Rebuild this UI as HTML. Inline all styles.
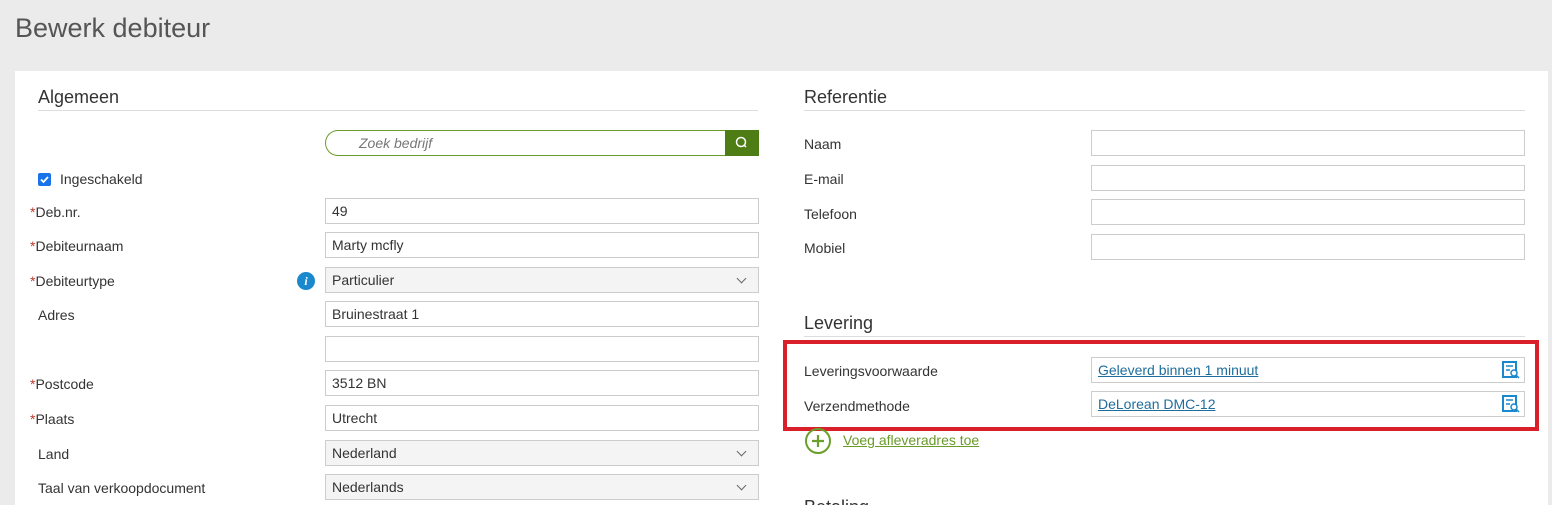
<!DOCTYPE html><html><head><style>
html,body{margin:0;width:1552px;height:505px;overflow:hidden}
body{background:#ebebeb;font-family:"Liberation Sans",sans-serif;color:#333;position:relative}
.a{position:absolute}
.t{font-size:27px;color:#555;left:15px;top:13px;font-weight:normal}
.panel{left:15px;top:71px;width:1533px;height:434px;background:#fff}
.h{font-size:18px;color:#333}
.line{height:1px;background:#ddd}
.l{font-size:14px;color:#333}
.s{color:#c0392b}
.in{border:1px solid #ccc;background:#fff;height:26px;box-sizing:border-box;font-size:14px;line-height:25px;padding-left:6px}
.sel{background:#f4f4f4}
.sel:after{content:"";position:absolute;right:13px;top:7px;width:6px;height:6px;border-right:1px solid #666;border-bottom:1px solid #666;transform:rotate(45deg)}
a{color:#1f6d9c;text-decoration:underline}
</style></head><body>
<div class="a t">Bewerk debiteur</div>
<div class="a panel"></div>
<div class="a h" style="left:38px;top:87px">Algemeen</div>
<div class="a line" style="left:38px;top:110px;width:720px"></div>
<div class="a h" style="left:804px;top:87px">Referentie</div>
<div class="a line" style="left:804px;top:110px;width:721px"></div>

<div class="a" style="left:325px;top:130px;width:400px;height:26px;border:1px solid #6a9a2a;border-right:none;border-radius:14px 0 0 14px;box-sizing:border-box;font-style:italic;color:#777;font-size:14px;line-height:25px;padding-left:33px">Zoek bedrijf</div>
<div class="a" style="left:725px;top:130px;width:34px;height:26px;background:#4e7d16"><svg width="34" height="26"><circle cx="16" cy="12" r="4.5" fill="none" stroke="#fff" stroke-width="1.5"/><line x1="19" y1="15" x2="21" y2="17" stroke="#fff" stroke-width="1.5"/></svg></div>

<div class="a" style="left:38px;top:173px;width:13px;height:13px;background:#1a73e8;border-radius:2px"><svg width="13" height="13"><path d="M3 6.5l2.5 2.5 4.5-5" fill="none" stroke="#fff" stroke-width="1.8"/></svg></div>
<div class="a l" style="left:60px;top:171px">Ingeschakeld</div>

<div class="a l" style="left:30px;top:204px"><span class="s">*</span>Deb.nr.</div>
<div class="a in" style="left:325px;top:198px;width:434px">49</div>
<div class="a l" style="left:30px;top:238px"><span class="s">*</span>Debiteurnaam</div>
<div class="a in" style="left:325px;top:232px;width:434px">Marty mcfly</div>
<div class="a l" style="left:30px;top:273px"><span class="s">*</span>Debiteurtype</div>
<div class="a" style="left:297px;top:272px;width:18px;height:18px;border-radius:50%;background:#1a88cc;color:#fff;font-size:12px;font-weight:bold;font-style:italic;text-align:center;line-height:18px;font-family:'Liberation Serif',serif">i</div>
<div class="a in sel" style="left:325px;top:267px;width:434px">Particulier</div>
<div class="a l" style="left:38px;top:307px">Adres</div>
<div class="a in" style="left:325px;top:301px;width:434px">Bruinestraat 1</div>
<div class="a in" style="left:325px;top:336px;width:434px"></div>
<div class="a l" style="left:30px;top:376px"><span class="s">*</span>Postcode</div>
<div class="a in" style="left:325px;top:370px;width:434px">3512 BN</div>
<div class="a l" style="left:30px;top:411px"><span class="s">*</span>Plaats</div>
<div class="a in" style="left:325px;top:405px;width:434px">Utrecht</div>
<div class="a l" style="left:38px;top:446px">Land</div>
<div class="a in sel" style="left:325px;top:440px;width:434px">Nederland</div>
<div class="a l" style="left:38px;top:480px">Taal van verkoopdocument</div>
<div class="a in sel" style="left:325px;top:474px;width:434px">Nederlands</div>

<div class="a l" style="left:804px;top:136px">Naam</div>
<div class="a in" style="left:1091px;top:130px;width:434px"></div>
<div class="a l" style="left:804px;top:171px">E-mail</div>
<div class="a in" style="left:1091px;top:165px;width:434px"></div>
<div class="a l" style="left:804px;top:206px">Telefoon</div>
<div class="a in" style="left:1091px;top:199px;width:434px"></div>
<div class="a l" style="left:804px;top:240px">Mobiel</div>
<div class="a in" style="left:1091px;top:234px;width:434px"></div>

<div class="a h" style="left:804px;top:313px">Levering</div>
<div class="a line" style="left:804px;top:336px;width:721px"></div>
<div class="a" style="left:783px;top:340px;width:756px;height:91px;border:4px solid #d9202a;box-sizing:border-box"></div>
<div class="a l" style="left:804px;top:363px">Leveringsvoorwaarde</div>
<div class="a in" style="left:1091px;top:357px;width:434px"><a>Geleverd binnen 1 minuut</a></div>
<div class="a l" style="left:804px;top:398px">Verzendmethode</div>
<div class="a in" style="left:1091px;top:391px;width:434px"><a>DeLorean DMC-12</a></div>
<svg class="a" style="left:1502px;top:361px" width="18" height="18"><rect x="1" y="1" width="13" height="15" fill="none" stroke="#1a88cc" stroke-width="2"/><line x1="4" y1="5" x2="11" y2="5" stroke="#1a88cc" stroke-width="1.5"/><line x1="4" y1="9" x2="8" y2="9" stroke="#1a88cc" stroke-width="1.5"/><circle cx="12" cy="12" r="3" fill="#fff" stroke="#1a88cc" stroke-width="1.5"/><line x1="14" y1="14" x2="17" y2="17" stroke="#1a88cc" stroke-width="1.5"/></svg>
<svg class="a" style="left:1502px;top:395px" width="18" height="18"><rect x="1" y="1" width="13" height="15" fill="none" stroke="#1a88cc" stroke-width="2"/><line x1="4" y1="5" x2="11" y2="5" stroke="#1a88cc" stroke-width="1.5"/><line x1="4" y1="9" x2="8" y2="9" stroke="#1a88cc" stroke-width="1.5"/><circle cx="12" cy="12" r="3" fill="#fff" stroke="#1a88cc" stroke-width="1.5"/><line x1="14" y1="14" x2="17" y2="17" stroke="#1a88cc" stroke-width="1.5"/></svg>
<svg class="a" style="left:804px;top:427px" width="28" height="28"><circle cx="14" cy="14" r="12" fill="none" stroke="#6aa02a" stroke-width="2"/><path d="M14 8v12M8 14h12" stroke="#6aa02a" stroke-width="2.2"/></svg>
<div class="a l" style="left:843px;top:432px"><a style="color:#6a9a2a">Voeg afleveradres toe</a></div>
<div class="a h" style="left:804px;top:497px">Betaling</div>
</body></html>
